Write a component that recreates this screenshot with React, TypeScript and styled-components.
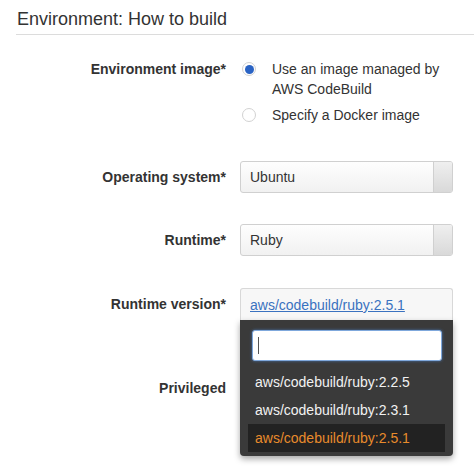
import React from "react";
import styled, { createGlobalStyle } from "styled-components";

const GlobalStyle = createGlobalStyle`
  html, body {
    margin: 0;
    padding: 0;
    background: #fff;
  }
  body {
    font-family: "Liberation Sans", Arial, Helvetica, sans-serif;
    color: #333;
  }
`;

const Page = styled.div`
  width: 474px;
  height: 468px;
  overflow: hidden;
  padding-left: 16px;
  box-sizing: border-box;
`;

const Header = styled.h2`
  margin: 0;
  padding: 7px 0 3px 1px;
  font-size: 18px;
  line-height: 24px;
  font-weight: normal;
  color: #333;
  border-bottom: 1px solid #dcdcdc;
`;

const Form = styled.div`
  display: flex;
  flex-direction: column;
  padding-top: 24px;
`;

const Row = styled.div<{ $gap?: number }>`
  display: flex;
  align-items: flex-start;
  margin-bottom: ${(p) => p.$gap ?? 32}px;
`;

const Label = styled.div<{ $tall?: boolean }>`
  width: 224px;
  padding-right: 14px;
  box-sizing: border-box;
  text-align: right;
  font-size: 14px;
  font-weight: bold;
  color: #333;
  line-height: ${(p) => (p.$tall ? 32 : 20)}px;
`;

const Control = styled.div`
  position: relative;
  width: 213px;
`;

const RadioList = styled.div`
  display: flex;
  flex-direction: column;
  gap: 6px;
`;

const RadioOption = styled.label`
  display: flex;
  align-items: flex-start;
  font-size: 14px;
  line-height: 20px;
  color: #333;
`;

const RadioCircle = styled.span<{ $checked?: boolean }>`
  flex: none;
  width: 14px;
  height: 14px;
  margin: 3px 16px 0 2px;
  border-radius: 50%;
  border: 1px solid #d2d2d2;
  box-sizing: border-box;
  background: #fff;
  display: flex;
  align-items: center;
  justify-content: center;

  &::after {
    content: "";
    display: ${(p) => (p.$checked ? "block" : "none")};
    width: 9px;
    height: 9px;
    border-radius: 50%;
    background: #2a63c4;
  }
`;

const Select = styled.div`
  display: flex;
  height: 32px;
  box-sizing: border-box;
  border: 1px solid #d0d0d0;
  border-radius: 3px;
  background: linear-gradient(#fefefe, #f1f1f1);
  overflow: hidden;
`;

const SelectValue = styled.div`
  flex: 1;
  padding-left: 9px;
  font-size: 14px;
  line-height: 30px;
  color: #333;
`;

const SelectArrow = styled.div`
  width: 18px;
  border-left: 1px solid #d0d0d0;
  background: linear-gradient(#efefef, #d9d9d9);
`;

const ComboHead = styled.div`
  height: 32px;
  box-sizing: border-box;
  border: 1px solid #d8d8d8;
  border-bottom: none;
  border-radius: 3px 3px 0 0;
  background: #f7f7f7;
  padding-left: 9px;
  font-size: 14px;
  line-height: 32px;
`;

const ComboLink = styled.span`
  color: #3a72c0;
  text-decoration: underline;
`;

const Menu = styled.div`
  position: absolute;
  top: 32px;
  left: 0;
  right: 0;
  z-index: 2;
  background: #3a3a3a;
  border-radius: 0 0 4px 4px;
  padding: 10px 8px 4px;
  box-shadow: 0 3px 6px rgba(0, 0, 0, 0.35);
`;

const Search = styled.div`
  height: 31px;
  margin: 0 3px 7px 4px;
  box-sizing: border-box;
  background: #fff;
  border: 1px solid #7fa8dc;
  border-radius: 3px;
  box-shadow: 0 0 3px rgba(80, 140, 220, 0.7);
  display: flex;
  align-items: center;
  padding-left: 5px;
`;

const Caret = styled.span`
  width: 1px;
  height: 17px;
  background: #555;
`;

const Option = styled.div<{ $active?: boolean }>`
  height: 28px;
  padding-left: 7px;
  font-size: 14px;
  line-height: 28px;
  color: ${(p) => (p.$active ? "#e88b2c" : "#f2f2f2")};
  background: ${(p) => (p.$active ? "#222" : "transparent")};
`;

const versions = [
  "aws/codebuild/ruby:2.2.5",
  "aws/codebuild/ruby:2.3.1",
  "aws/codebuild/ruby:2.5.1",
];

const App = () => {
  return (
    <>
      <GlobalStyle />
      <Page>
        <Header>Environment: How to build</Header>
        <Form>
          <Row $gap={36}>
            <Label>Environment image*</Label>
            <Control>
              <RadioList>
                <RadioOption>
                  <RadioCircle $checked />
                  <span>
                    Use an image managed by
                    <br />
                    AWS CodeBuild
                  </span>
                </RadioOption>
                <RadioOption>
                  <RadioCircle />
                  <span>Specify a Docker image</span>
                </RadioOption>
              </RadioList>
            </Control>
          </Row>
          <Row $gap={31}>
            <Label $tall>Operating system*</Label>
            <Control>
              <Select>
                <SelectValue>Ubuntu</SelectValue>
                <SelectArrow />
              </Select>
            </Control>
          </Row>
          <Row $gap={32}>
            <Label $tall>Runtime*</Label>
            <Control>
              <Select>
                <SelectValue>Ruby</SelectValue>
                <SelectArrow />
              </Select>
            </Control>
          </Row>
          <Row $gap={58}>
            <Label $tall>Runtime version*</Label>
            <Control>
              <ComboHead>
                <ComboLink>aws/codebuild/ruby:2.5.1</ComboLink>
              </ComboHead>
              <Menu>
                <Search>
                  <Caret />
                </Search>
                {versions.map((v, i) => (
                  <Option key={v} $active={i === versions.length - 1}>
                    {v}
                  </Option>
                ))}
              </Menu>
            </Control>
          </Row>
          <Row>
            <Label>Privileged</Label>
          </Row>
        </Form>
      </Page>
    </>
  );
};

export default App;
